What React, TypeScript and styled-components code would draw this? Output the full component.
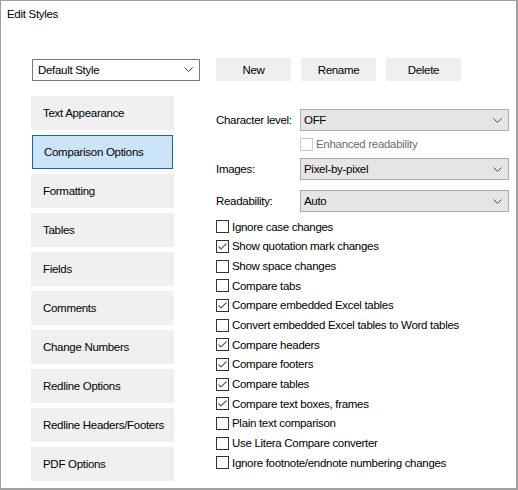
import styled, { createGlobalStyle } from "styled-components";

const GlobalStyle = createGlobalStyle`
   html, body {
      margin: 0;
      padding: 0;
      background: #ffffff;
   }
   * {
      box-sizing: border-box;
   }
`;

const Dialog = styled.div`
   width: 518px;
   height: 490px;
   border-left: 1px solid #a0a0a0;
   border-top: 1px solid #a0a0a0;
   border-right: 2px solid #a0a0a0;
   border-bottom: 2px solid #a0a0a0;
   background: #ffffff;
   font-family: "Segoe UI", "Liberation Sans", Arial, sans-serif;
   font-size: 11.5px;
   letter-spacing: -0.3px;
   color: #000000;
   white-space: nowrap;
   overflow: hidden;
`;

const Title = styled.div`
   height: 28px;
   line-height: 26px;
   padding-left: 6px;
`;

const Content = styled.div`
   padding: 29px 0 0 30px;
`;

const TopRow = styled.div`
   display: flex;
   align-items: center;
`;

const StyleSelect = styled.div`
   width: 168px;
   height: 22px;
   margin-left: 1px;
   border: 1px solid #7a7a7a;
   background: #ffffff;
   display: flex;
   align-items: center;
   justify-content: space-between;
   padding: 0 6px 0 5px;
`;

const ButtonGroup = styled.div`
   display: flex;
   gap: 10px;
   margin-left: 16px;
`;

const FlatButton = styled.div`
   width: 75px;
   height: 23px;
   background: #efefef;
   display: flex;
   align-items: center;
   justify-content: center;
`;

const Main = styled.div`
   display: flex;
   margin-top: 15px;
`;

const Nav = styled.div`
   width: 143px;
   flex: none;
   display: flex;
   flex-direction: column;
   gap: 5px;
`;

const NavItem = styled.div<{ $active?: boolean }>`
   height: 34px;
   display: flex;
   align-items: center;
   padding-left: ${(p) => (p.$active ? "11px" : "12px")};
   background: ${(p) => (p.$active ? "#cce4f7" : "#f0f0f0")};
   border: ${(p) => (p.$active ? "1px solid #1c65ad" : "none")};
   margin: ${(p) => (p.$active ? "0 1px" : "0")};
`;

const Options = styled.div`
   margin-left: 42px;
   padding-top: 13px;
   display: flex;
   flex-direction: column;
`;

const FieldRow = styled.div<{ $top?: number }>`
   display: flex;
   align-items: center;
   margin-top: ${(p) => p.$top ?? 0}px;
`;

const FieldLabel = styled.div`
   width: 84px;
   flex: none;
`;

const Select = styled.div`
   width: 209px;
   height: 22px;
   border: 1px solid #adadad;
   background: #e5e5e5;
   display: flex;
   align-items: center;
   justify-content: space-between;
   padding: 0 6px 0 3px;
`;

const SubOption = styled.div`
   display: flex;
   align-items: center;
   height: 18px;
   margin: 4px 0 0 84px;
   color: #6d6d6d;
`;

const CheckList = styled.div`
   display: grid;
   grid-auto-rows: 19.67px;
   margin-top: 5px;
`;

const CheckRow = styled.div`
   display: flex;
   align-items: center;
`;

const Box = styled.span<{ $disabled?: boolean }>`
   width: 13px;
   height: 13px;
   flex: none;
   border: 1px solid ${(p) => (p.$disabled ? "#cccccc" : "#333333")};
   background: #ffffff;
   margin-right: 3px;
   display: flex;
   align-items: center;
   justify-content: center;
`;

const Chevron = () => (
   <svg width="9" height="5" viewBox="0 0 9 5">
      <path d="M0.5 0.5 L4.5 4.5 L8.5 0.5" fill="none" stroke="#444" strokeWidth="1" />
   </svg>
);

const Check = () => (
   <svg width="11" height="11" viewBox="0 0 11 11">
      <path d="M1.5 5.5 L4 8 L9.5 2.5" fill="none" stroke="#5a5a5a" strokeWidth="1.1" />
   </svg>
);

const CheckBox: React.FC<{ checked?: boolean; disabled?: boolean }> = ({ checked, disabled }) => (
   <Box $disabled={disabled}>{checked && <Check />}</Box>
);

const navItems = [
   "Text Appearance",
   "Comparison Options",
   "Formatting",
   "Tables",
   "Fields",
   "Comments",
   "Change Numbers",
   "Redline Options",
   "Redline Headers/Footers",
   "PDF Options",
];

const checks: [string, boolean][] = [
   ["Ignore case changes", false],
   ["Show quotation mark changes", true],
   ["Show space changes", false],
   ["Compare tabs", false],
   ["Compare embedded Excel tables", true],
   ["Convert embedded Excel tables to Word tables", false],
   ["Compare headers", true],
   ["Compare footers", true],
   ["Compare tables", true],
   ["Compare text boxes, frames", true],
   ["Plain text comparison", false],
   ["Use Litera Compare converter", false],
   ["Ignore footnote/endnote numbering changes", false],
];

const App: React.FC = () => {
   return (
      <>
         <GlobalStyle />
         <Dialog>
            <Title>Edit Styles</Title>
            <Content>
               <TopRow>
                  <StyleSelect>
                     <span>Default Style</span>
                     <Chevron />
                  </StyleSelect>
                  <ButtonGroup>
                     <FlatButton>New</FlatButton>
                     <FlatButton>Rename</FlatButton>
                     <FlatButton>Delete</FlatButton>
                  </ButtonGroup>
               </TopRow>
               <Main>
                  <Nav>
                     {navItems.map((item) => (
                        <NavItem key={item} $active={item === "Comparison Options"}>
                           {item}
                        </NavItem>
                     ))}
                  </Nav>
                  <Options>
                     <FieldRow>
                        <FieldLabel>Character level:</FieldLabel>
                        <Select>
                           <span>OFF</span>
                           <Chevron />
                        </Select>
                     </FieldRow>
                     <SubOption>
                        <CheckBox disabled />
                        <span>Enhanced readability</span>
                     </SubOption>
                     <FieldRow $top={5}>
                        <FieldLabel>Images:</FieldLabel>
                        <Select>
                           <span>Pixel-by-pixel</span>
                           <Chevron />
                        </Select>
                     </FieldRow>
                     <FieldRow $top={10}>
                        <FieldLabel>Readability:</FieldLabel>
                        <Select>
                           <span>Auto</span>
                           <Chevron />
                        </Select>
                     </FieldRow>
                     <CheckList>
                        {checks.map(([label, checked]) => (
                           <CheckRow key={label}>
                              <CheckBox checked={checked} />
                              <span>{label}</span>
                           </CheckRow>
                        ))}
                     </CheckList>
                  </Options>
               </Main>
            </Content>
         </Dialog>
      </>
   );
};

export default App;
